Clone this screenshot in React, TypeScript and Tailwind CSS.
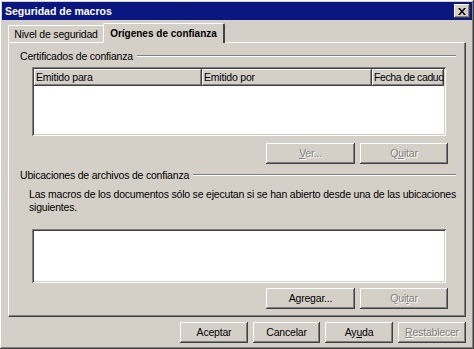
import React from 'react';

const raised =
  'shadow-[inset_-1px_-1px_#404040,inset_1px_1px_#ffffff,inset_-2px_-2px_#808080,inset_2px_2px_#d4d0c8]';
const sunken =
  'shadow-[inset_1px_1px_#808080,inset_-1px_-1px_#ffffff,inset_2px_2px_#404040,inset_-2px_-2px_#d4d0c8]';

const Btn: React.FC<{ w: string; disabled?: boolean; children: React.ReactNode }> = ({ w, disabled, children }) => (
  <div
    className={`${w} h-[21px] flex items-center justify-center bg-[#d4d0c8] ${raised} ${
      disabled ? 'text-[#808080] [text-shadow:1px_1px_0_#ffffff]' : 'text-black'
    }`}
  >
    {children}
  </div>
);

const GroupTitle: React.FC<{ label: string }> = ({ label }) => (
  <div className="flex items-center h-[14px]">
    <span className="pr-[4px] whitespace-nowrap">{label}</span>
    <div className="flex-1 flex flex-col">
      <div className="h-px bg-[#808080]" />
      <div className="h-px bg-white" />
    </div>
  </div>
);

export default function App() {
  return (
    <div
      className={`w-[474px] h-[349px] bg-[#d4d0c8] p-[2px] text-[10.5px] tracking-[-0.2px] leading-[13px] text-black flex flex-col ${raised}`}
      style={{ fontFamily: '"Liberation Sans", Arial, sans-serif' }}
    >
      {/* title bar */}
      <div className="h-[18px] bg-[#0a1780] flex items-center justify-between pl-[3px] pr-[2px]">
        <span className="text-white font-bold text-[10.5px] tracking-normal">Seguridad de macros</span>
        <div className={`w-[16px] h-[14px] bg-[#d4d0c8] flex items-center justify-center ${raised}`}>
          <svg width="8" height="7" viewBox="0 0 8 7">
            <path d="M0 0h2l2 2.5L6 0h2L5 3.5 8 7H6L4 4.5 2 7H0l3-3.5z" fill="#000" />
          </svg>
        </div>
      </div>

      {/* tabs */}
      <div className="flex items-end h-[20px] mt-[2px] pl-[6px]">
        <div className="w-[96px] h-[17px] flex items-center justify-center whitespace-nowrap border-l border-t border-white border-r border-r-[#808080] rounded-t-[2px]">
          Nivel de seguridad
        </div>
        <div className="w-[122px] h-[20px] -ml-[1px] -mb-[1px] flex items-center justify-center whitespace-nowrap font-bold tracking-normal text-[10px] bg-[#d4d0c8] relative z-10 border-l border-t border-white border-r-2 border-r-[#404040] rounded-t-[2px]">
          Orígenes de confianza
        </div>
      </div>

      {/* panel */}
      <div className="mx-[6px] h-[275px] border-l border-t border-white border-r border-b border-r-[#404040] border-b-[#404040] flex flex-col">
        <div className="flex-1 border-r border-b border-[#808080] pl-[11px] pr-[8px] pt-[6px] flex flex-col">
          <GroupTitle label="Certificados de confianza" />
          <div className="pl-[12px] pr-[10px] mt-[4px]">
            <div className={`h-[69px] bg-white p-[2px] ${sunken}`}>
              <div className="h-[17px] flex bg-[#d4d0c8]">
                <div className={`w-[168px] flex items-center pl-[2px] ${raised}`}>Emitido para</div>
                <div className={`w-[170px] flex items-center pl-[2px] ${raised}`}>Emitido por</div>
                <div className={`flex-1 flex items-center pl-[2px] overflow-hidden whitespace-nowrap tracking-[-0.4px] ${raised}`}>
                  Fecha de caducidad
                </div>
              </div>
            </div>
            <div className="flex justify-end gap-[5px] mt-[7px] -mr-[2px]">
              <Btn w="w-[89px]" disabled>
                <span>
                  <span className="underline">V</span>er...
                </span>
              </Btn>
              <Btn w="w-[88px]" disabled>
                <span>
                  Q<span className="underline">u</span>itar
                </span>
              </Btn>
            </div>
          </div>

          <div className="mt-[4px]">
            <GroupTitle label="Ubicaciones de archivos de confianza" />
          </div>
          <div className="pl-[9px] mt-[6px] leading-[13px] whitespace-nowrap">
            Las macros de los documentos sólo se ejecutan si se han abierto desde una de las ubicaciones
            <br />
            siguientes.
          </div>
          <div className="pl-[12px] pr-[10px] mt-[15px]">
            <div className={`h-[54px] bg-white ${sunken}`} />
            <div className="flex justify-end gap-[5px] mt-[5px] -mr-[2px]">
              <Btn w="w-[89px]">Agregar...</Btn>
              <Btn w="w-[88px]" disabled>
                <span>
                  Qui<span className="underline">t</span>ar
                </span>
              </Btn>
            </div>
          </div>
        </div>
      </div>

      {/* bottom buttons */}
      <div className="flex justify-end gap-[5px] mt-[5px] pr-[6px]">
        <Btn w="w-[68px]">Aceptar</Btn>
        <Btn w="w-[67px]">Cancelar</Btn>
        <Btn w="w-[68px]">
          <span>
            Ay<span className="underline">u</span>da
          </span>
        </Btn>
        <Btn w="w-[68px]" disabled>
          <span>
            <span className="underline">R</span>establecer
          </span>
        </Btn>
      </div>
    </div>
  );
}
